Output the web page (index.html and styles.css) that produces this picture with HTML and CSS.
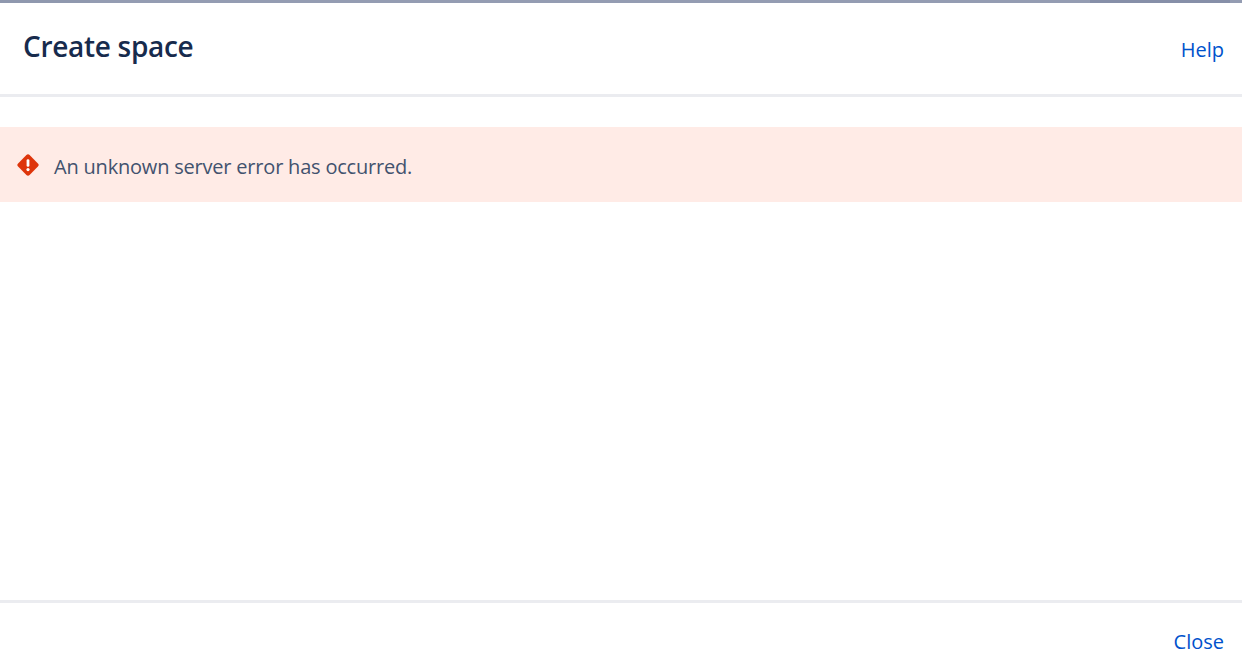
FILE: index.html
```html
<!DOCTYPE html>
<html lang="en">
<head>
    <meta charset="UTF-8">
    <meta name="viewport" content="width=device-width, initial-scale=1.0">
    <title>Create space</title>
    <link rel="stylesheet" href="styles.css">
</head>
<body>
    <div class="dialog">
        <!-- Strip of the page behind the dialog -->
        <div class="backdrop">
            <span class="backdrop-a"></span>
            <span class="backdrop-b"></span>
            <span class="backdrop-c"></span>
            <span class="backdrop-d"></span>
        </div>

        <div class="header">
            <h1>Create space</h1>
            <a class="link" href="#">Help</a>
        </div>

        <div class="content">
            <div class="alert">
                <svg class="alert-icon" viewBox="0 0 22 22" width="22" height="22" aria-hidden="true">
                    <path fill="#de350b" d="M9.4 1.1a2.3 2.3 0 0 1 3.2 0l8.3 8.3a2.3 2.3 0 0 1 0 3.2l-8.3 8.3a2.3 2.3 0 0 1-3.2 0l-8.3-8.3a2.3 2.3 0 0 1 0-3.2z"/>
                    <rect fill="#fff" x="9.6" y="5.2" width="2.8" height="7.6" rx="1.4"/>
                    <circle fill="#fff" cx="11" cy="15.6" r="1.6"/>
                </svg>
                <span class="alert-text">An unknown server error has occurred.</span>
            </div>
        </div>

        <div class="footer">
            <a class="link" href="#">Close</a>
        </div>
    </div>
</body>
</html>
```

FILE: styles.css
```css
* { margin: 0; padding: 0; box-sizing: border-box; }
html, body { height: 100%; }
body { font-family: "Open Sans", "Noto Sans", sans-serif; background: white; overflow: hidden; }
.dialog { display: flex; flex-direction: column; height: 670px; }
.backdrop { display: flex; height: 3px; flex: none; }
.backdrop-a { width: 90px; background: #8f98ae; }
.backdrop-b { width: 1000px; background: #949cb2; }
.backdrop-c { width: 140px; background: #868fa8; }
.backdrop-d { flex: 1; background: #949cb2; }
.header { display: flex; justify-content: space-between; align-items: center; height: 94px; flex: none; padding: 0 18px 0 23px; border-bottom: 3px solid #ebecf0; }
.header h1 { font-size: 28px; font-weight: 600; color: #172b4d; letter-spacing: -0.3px; margin-top: -6px; }
.header .link { margin-top: 2px; }
.link { font-size: 20px; color: #0052cc; text-decoration: none; }
.content { flex: 1; padding-top: 30px; }
.alert { display: flex; align-items: center; gap: 15px; height: 75px; padding: 0 0 0 17px; background: #ffebe6; color: #42526e; font-size: 20px; letter-spacing: -0.2px; }
.alert-icon { flex: none; margin-top: 1px; }
.alert-text { margin-top: 3px; }
.footer { display: flex; justify-content: flex-end; align-items: center; height: 70px; flex: none; padding: 10px 18px 0 0; border-top: 3px solid #ebecf0; }
```
